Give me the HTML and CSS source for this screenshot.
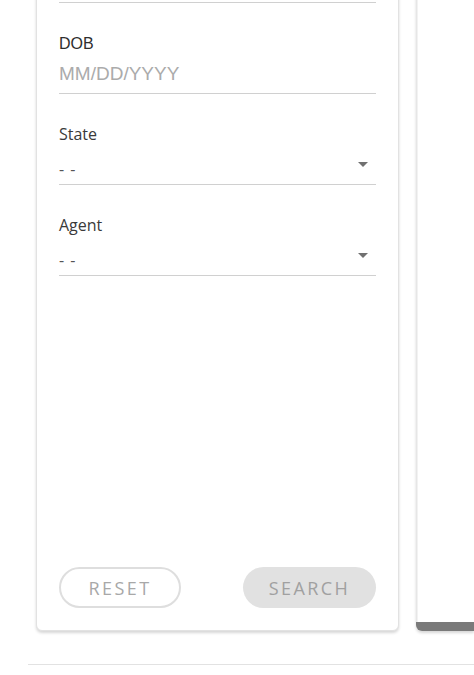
FILE: index.html
```html
<!DOCTYPE html>
<html lang="en">
<head>
<meta charset="utf-8">
<title>Search</title>
<link rel="stylesheet" href="styles.css">
</head>
<body>
<div class="page">
  <div class="row">
    <form class="card">
      <div class="field">
        <div class="label"></div>
        <input class="input" type="text" placeholder="">
      </div>
      <div class="field">
        <label class="label label-dob">DOB</label>
        <input class="input" type="text" placeholder="MM/DD/YYYY">
      </div>
      <div class="field">
        <label class="label">State</label>
        <div class="select">
          <span class="select-value">- -</span>
          <svg class="caret" width="10" height="5" viewBox="0 0 10 5"><path d="M0 0H10L5 5Z" fill="#707070"/></svg>
        </div>
      </div>
      <div class="field">
        <label class="label">Agent</label>
        <div class="select">
          <span class="select-value">- -</span>
          <svg class="caret" width="10" height="5" viewBox="0 0 10 5"><path d="M0 0H10L5 5Z" fill="#707070"/></svg>
        </div>
      </div>
      <div class="actions">
        <button type="button" class="btn btn-reset">RESET</button>
        <button type="button" class="btn btn-search">SEARCH</button>
      </div>
    </form>
    <div class="panel">
      <div class="panel-body"></div>
      <div class="panel-bar"></div>
    </div>
  </div>
  <div class="footer"></div>
</div>
</body>
</html>
```

FILE: styles.css
```css
html, body {
  margin: 0;
  padding: 0;
  background: #fff;
  overflow: hidden;
}
body {
  font-family: "Open Sans", "Liberation Sans", sans-serif;
  color: #333;
}
.page {
  padding-left: 28px;
}
.row {
  display: flex;
  gap: 17px;
  padding-left: 8px;
  margin-top: -100px;
}
.card {
  box-sizing: border-box;
  width: 363px;
  height: 731px;
  flex: none;
  display: flex;
  flex-direction: column;
  padding: 11px 22px 22px 22px;
  border: 1px solid #e2e2e2;
  border-radius: 6px;
  box-shadow: 0 2px 3px rgba(0, 0, 0, 0.16);
  background: #fff;
  margin: 0;
}
.field {
  display: flex;
  flex-direction: column;
  margin-top: 29px;
}
.label {
  font-size: 16px;
  line-height: 23px;
  height: 23px;
  color: #3a3a3a;
}
.label-dob {
  font-family: "Liberation Sans", Arial, sans-serif;
  color: #2e2e2e;
}
.input {
  box-sizing: border-box;
  height: 39px;
  margin: 0;
  padding: 0;
  border: none;
  border-bottom: 1px solid #d0d0d0;
  outline: none;
  font-family: "Liberation Sans", Arial, sans-serif;
  font-size: 19px;
  line-height: 38px;
  color: #333;
  background: transparent;
}
.input::placeholder {
  color: #ababab;
}
.select {
  box-sizing: border-box;
  height: 39px;
  border-bottom: 1px solid #d0d0d0;
  display: flex;
  align-items: flex-start;
  justify-content: space-between;
  padding-right: 8px;
}
.select-value {
  font-size: 16px;
  line-height: 22px;
  margin-top: 12px;
  color: #555;
  letter-spacing: 1px;
}
.caret {
  display: block;
  margin-top: 16px;
}
.actions {
  margin-top: auto;
  display: flex;
  justify-content: space-between;
  align-items: center;
}
.btn {
  box-sizing: border-box;
  height: 41px;
  border-radius: 21px;
  font-family: "Open Sans", sans-serif;
  font-size: 18px;
  letter-spacing: 2.4px;
  padding: 0;
  cursor: default;
}
.btn-reset {
  width: 122px;
  background: #fff;
  border: 2px solid #dedede;
  color: #a8a8a8;
}
.btn-search {
  width: 133px;
  background: #e1e1e1;
  border: none;
  color: #a0a0a0;
}
.panel {
  flex: 1;
  min-width: 0;
  display: flex;
  flex-direction: column;
  border-left: 1px solid #e6e6e6;
  border-bottom-left-radius: 6px;
  box-shadow: 0 2px 3px rgba(0, 0, 0, 0.16);
}
.panel-body {
  flex: 1;
  border-left: 1px solid #f2f2f2;
}
.panel-bar {
  height: 9px;
  background: #7a7a7a;
  border-bottom-left-radius: 6px;
  margin-left: -1px;
}
.footer {
  margin-top: 33px;
  border-top: 1px solid #e2e2e2;
}
```
